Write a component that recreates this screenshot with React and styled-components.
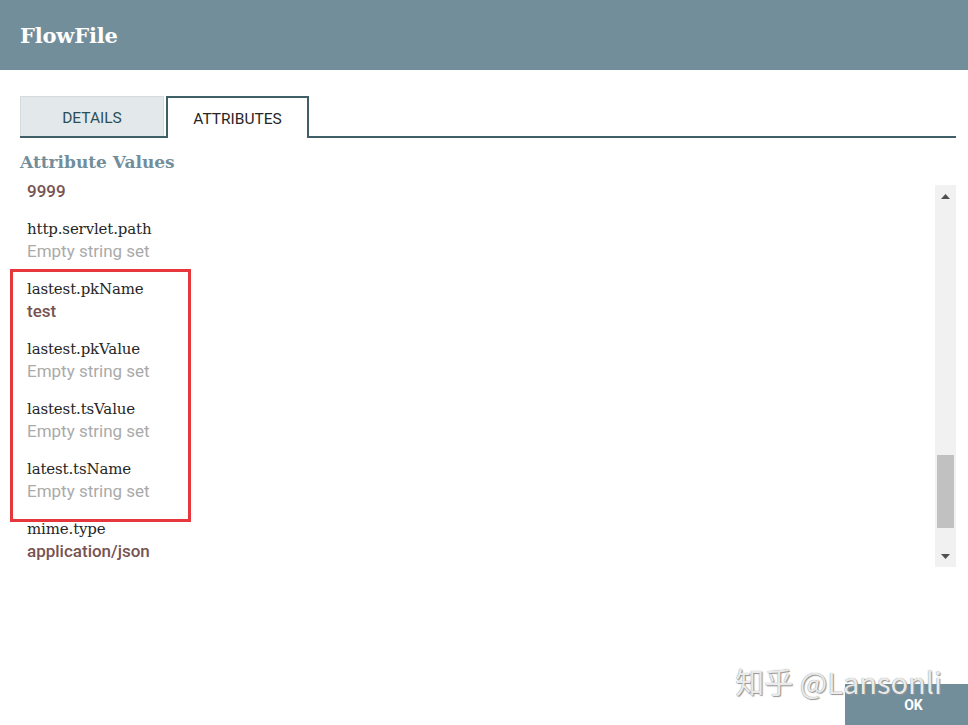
import React from 'react';
import styled, {createGlobalStyle} from "styled-components";

const GlobalStyle = createGlobalStyle`
    html, body {
      margin: 0;
      padding: 0;
      background: #fff;
    }
    #root {
      height: 725px;
      overflow: hidden;
    }
`;

const attributes = [
    {name: null, value: '9999'},
    {name: 'http.servlet.path', value: ''},
    {name: 'lastest.pkName', value: 'test', marked: true},
    {name: 'lastest.pkValue', value: '', marked: true},
    {name: 'lastest.tsValue', value: '', marked: true},
    {name: 'latest.tsName', value: '', marked: true},
    {name: 'mime.type', value: 'application/json'},
];

const Attribute = ({item}) => (
    <Entry>
        {item.name && <AttrName>{item.name}</AttrName>}
        {item.value ? <AttrValue>{item.value}</AttrValue> : <AttrValue empty>Empty string set</AttrValue>}
    </Entry>
);

const App = () => {
    const before = attributes.filter((a, i) => !a.marked && i < 2);
    const marked = attributes.filter(a => a.marked);
    const after = attributes.filter((a, i) => !a.marked && i >= 2);

    return (
        <Dialog>
            <GlobalStyle/>
            <Header>FlowFile</Header>
            <Body>
                <Tabs>
                    <Tab>DETAILS</Tab>
                    <Tab active>ATTRIBUTES</Tab>
                </Tabs>
                <SectionTitle>Attribute Values</SectionTitle>
                <ListArea>
                    <List>
                        {before.map((a, i) => <Attribute key={'b' + i} item={a}/>)}
                        <Marked>
                            {marked.map((a, i) => <Attribute key={'m' + i} item={a}/>)}
                            <RedBox/>
                        </Marked>
                        {after.map((a, i) => <Attribute key={'a' + i} item={a}/>)}
                    </List>
                    <Scrollbar>
                        <Arrow>
                            <svg width="9" height="5" viewBox="0 0 9 5"><path d="M0 5 L4.5 0 L9 5 Z" fill="#505050"/></svg>
                        </Arrow>
                        <Track>
                            <Thumb/>
                        </Track>
                        <Arrow>
                            <svg width="9" height="5" viewBox="0 0 9 5"><path d="M0 0 L4.5 5 L9 0 Z" fill="#505050"/></svg>
                        </Arrow>
                    </Scrollbar>
                </ListArea>
            </Body>
            <Footer>
                <OkButton>OK</OkButton>
                <Watermark>知乎 @Lansonli</Watermark>
            </Footer>
        </Dialog>
    );
};

const Dialog = styled.div`
    height: 725px;
    display: flex;
    flex-direction: column;
    background: #fff;
    position: relative;
`;

const Header = styled.div`
    height: 70px;
    flex-shrink: 0;
    background: #728e9b;
    color: #fff;
    display: flex;
    align-items: center;
    padding-left: 20px;
    font-family: "DejaVu Serif", serif;
    font-weight: bold;
    font-size: 21px;
    letter-spacing: -0.2px;
`;

const Body = styled.div`
    flex: 1;
    padding: 26px 12px 0 20px;
    display: flex;
    flex-direction: column;
`;

const Tabs = styled.div`
    display: flex;
    gap: 2px;
    height: 42px;
    border-bottom: 2px solid #3f5f66;
    box-sizing: border-box;
`;

const Tab = styled.div`
    width: ${p => p.active ? 143 : 144}px;
    box-sizing: border-box;
    display: flex;
    align-items: center;
    justify-content: center;
    font-family: Roboto, "Liberation Sans", sans-serif;
    font-size: 15.5px;
    color: ${p => p.active ? '#262626' : '#2c4f56'};
    background: ${p => p.active ? '#fff' : '#e3e8eb'};
    border: ${p => p.active ? '2px solid #3f5f66' : '1px solid #d4dadd'};
    border-bottom: none;
    margin-bottom: ${p => p.active ? '-2px' : '0'};
    padding-top: 2px;
`;

const SectionTitle = styled.div`
    margin-top: 13px;
    font-family: "DejaVu Serif", serif;
    font-weight: bold;
    font-size: 17px;
    color: #728e9b;
    line-height: 22px;
`;

const ListArea = styled.div`
    margin-top: 6px;
    height: 393px;
    display: flex;
`;

const List = styled.div`
    flex: 1;
    padding: 1px 0 0 7px;
    display: flex;
    flex-direction: column;
    gap: 16px;
`;

const Entry = styled.div`
    display: flex;
    flex-direction: column;
`;

const Marked = styled.div`
    position: relative;
    display: flex;
    flex-direction: column;
    gap: 16px;
`;

const RedBox = styled.div`
    position: absolute;
    left: -17px;
    top: -9px;
    width: 181px;
    height: 253px;
    box-sizing: border-box;
    border: 3px solid #e5373c;
    pointer-events: none;
`;

const AttrName = styled.div`
    font-family: "DejaVu Serif", serif;
    font-size: 15px;
    letter-spacing: -0.15px;
    line-height: 22px;
    color: #262626;
`;

const AttrValue = styled.div`
    font-family: Roboto, "Liberation Sans", sans-serif;
    font-size: 17px;
    line-height: 22px;
    font-weight: ${p => p.empty ? 400 : 500};
    color: ${p => p.empty ? '#aaaaaa' : '#775351'};
`;

const Scrollbar = styled.div`
    width: 21px;
    margin-top: 6px;
    height: 382px;
    background: #f1f1f1;
    display: flex;
    flex-direction: column;
    align-items: center;
`;

const Arrow = styled.div`
    height: 22px;
    width: 100%;
    display: flex;
    align-items: center;
    justify-content: center;
`;

const Track = styled.div`
    flex: 1;
    width: 100%;
    display: flex;
    flex-direction: column;
    justify-content: flex-end;
    padding-bottom: 17px;
    box-sizing: border-box;
`;

const Thumb = styled.div`
    height: 73px;
    margin: 0 2px;
    background: #c1c1c1;
`;

const Footer = styled.div`
    height: 41px;
    display: flex;
    justify-content: flex-end;
    position: relative;
`;

const OkButton = styled.div`
    width: 123px;
    padding-left: 14px;
    box-sizing: border-box;
    background: #728e9b;
    color: #fff;
    font-family: Roboto, "Liberation Sans", sans-serif;
    font-weight: bold;
    font-size: 14px;
    display: flex;
    align-items: center;
    justify-content: center;
`;

const Watermark = styled.div`
    position: absolute;
    right: 26px;
    top: -19px;
    font-family: "Noto Sans CJK SC", "Noto Sans", sans-serif;
    font-size: 29px;
    line-height: 32px;
    color: rgba(255, 255, 255, 0.85);
    text-shadow: 0 0 1px #777, 1px 1px 1px #999;
    white-space: nowrap;
`;

export default App
